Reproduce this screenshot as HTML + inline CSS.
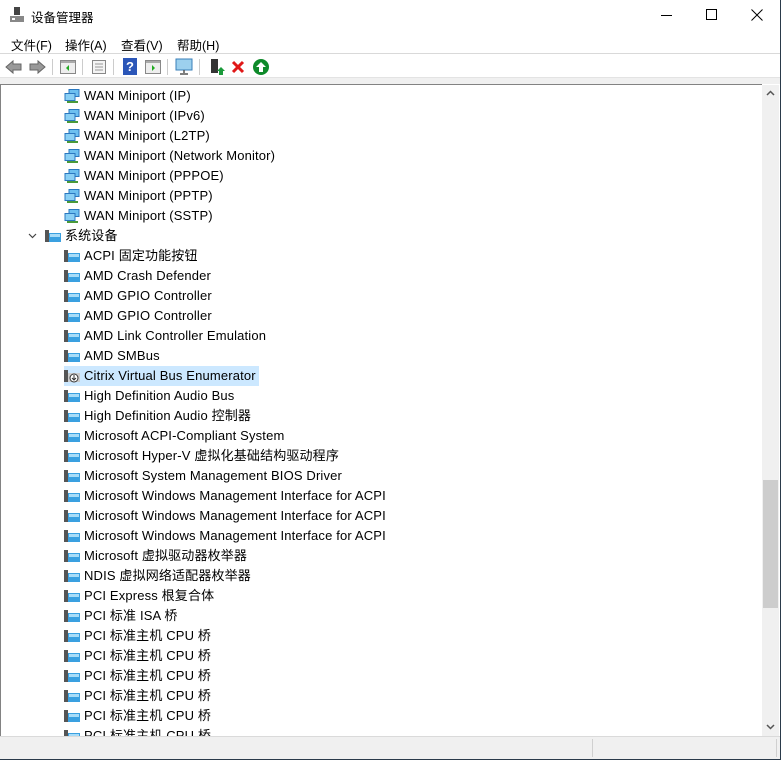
<!DOCTYPE html>
<html><head><meta charset="utf-8"><style>
*{margin:0;padding:0;box-sizing:border-box}
body{width:781px;height:760px;overflow:hidden;background:#fff;font-family:"Liberation Sans","Noto Sans CJK SC",sans-serif;font-size:12px;color:#000;position:relative}
.abs{position:absolute}
.title{left:0;top:0;width:781px;height:30px;background:#fff}
.menu{top:30px;height:24px;left:0;width:781px;border-bottom:1px solid #d9d9d9}
.menu span{position:absolute;top:5px;font-size:12.5px}
.tb{top:55px;height:23px;width:781px;border-bottom:1px solid #e3e3e3}
.gap{top:78px;height:6px;width:781px;background:#f0f0f0}
.tree{top:84px;left:0;width:762px;height:652px;border-top:1px solid #828282;border-left:1px solid #828282;overflow:hidden}
.row{position:absolute;height:20px;line-height:20px;font-size:13px;letter-spacing:0.15px;white-space:nowrap}
.ic{position:absolute;width:16px;height:14px;top:3px}
.sb{left:762px;top:85px;width:17px;height:651px;background:#f0f0f0}
.status{top:736px;left:0;width:781px;height:23px;background:#f0f0f0;border-top:1px solid #dadada}
.sep{position:absolute;top:4px;width:1px;height:16px;background:#ccc}
</style></head><body>
<div class="abs title">
 <svg class="abs" style="left:9px;top:7px" width="16" height="16"><rect x="5" y="0" width="6" height="8" fill="#444"/><rect x="1" y="9" width="14" height="6" fill="#888"/><rect x="3" y="11" width="3" height="2" fill="#fff"/></svg>
 <span class="abs" style="left:31px;top:7px;font-size:12.5px">设备管理器</span>
 <div class="abs" style="left:661px;top:15px;width:11px;height:1px;background:#000"></div>
 <div class="abs" style="left:706px;top:9px;width:11px;height:11px;border:1px solid #000"></div>
 <svg class="abs" style="left:751px;top:9px" width="12" height="12"><path d="M0.5 0.5L11.5 11.5M11.5 0.5L0.5 11.5" stroke="#000"/></svg>
</div>
<div class="abs menu">
 <span style="left:11px">文件(F)</span><span style="left:65px">操作(A)</span><span style="left:121px">查看(V)</span><span style="left:177px">帮助(H)</span>
</div>
<div class="abs tb">
 <svg class="abs" style="left:5px;top:4px" width="42" height="16"><path d="M1 8L8 2V5H16V11H8V14Z" fill="#999" stroke="#666"/><path d="M40 8L33 2V5H25V11H33V14Z" fill="#999" stroke="#666"/></svg>
 <div class="sep" style="left:52px"></div>
 <svg class="abs" style="left:60px;top:4px" width="16" height="16"><rect x="0.5" y="1.5" width="15" height="13" fill="#eee" stroke="#888"/><rect x="1" y="2" width="14" height="2" fill="#aaa"/><path d="M9 6L6 9L9 12Z" fill="#2a2"/></svg>
 <div class="sep" style="left:82px"></div>
 <svg class="abs" style="left:91px;top:4px" width="16" height="16"><rect x="1.5" y="1.5" width="13" height="13" fill="#f4f4f4" stroke="#888"/><path d="M4 5H12M4 8H12M4 11H12" stroke="#999"/></svg>
 <div class="sep" style="left:113px"></div>
 <div class="abs" style="left:123px;top:3px;width:14px;height:17px;background:#2b56b8;color:#fff;font-weight:bold;text-align:center;line-height:17px;font-size:13px">?</div>
 <svg class="abs" style="left:145px;top:4px" width="16" height="16"><rect x="0.5" y="1.5" width="15" height="13" fill="#eee" stroke="#888"/><rect x="1" y="2" width="14" height="2" fill="#aaa"/><path d="M7 6L10 9L7 12Z" fill="#2a2"/></svg>
 <div class="sep" style="left:167px"></div>
 <svg class="abs" style="left:175px;top:3px" width="18" height="18"><rect x="1" y="1" width="16" height="11" fill="#9cd0ee" stroke="#3a7fb8"/><path d="M9 12V15M5 16H13" stroke="#555" stroke-width="1.5"/></svg>
 <div class="sep" style="left:199px"></div>
 <svg class="abs" style="left:208px;top:3px" width="18" height="18"><rect x="3" y="1" width="7" height="14" fill="#333"/><path d="M13 9L17 13H15V17H11V13H9Z" fill="#1a9a3a"/></svg>
 <svg class="abs" style="left:231px;top:5px" width="14" height="14"><path d="M2 2L12 12M12 2L2 12" stroke="#e01818" stroke-width="3"/></svg>
 <svg class="abs" style="left:252px;top:3px" width="18" height="18"><circle cx="9" cy="9" r="8" fill="#0e8a2a"/><path d="M9 4L14 9H11V14H7V9H4Z" fill="#fff"/></svg>
</div>
<div class="abs gap"></div>
<div class="abs tree" id="tree"></div>
<div class="abs sb">
 <svg class="abs" style="left:4px;top:5px" width="9" height="6"><path d="M1 5L4.5 1.5L8 5" stroke="#555" stroke-width="1.5" fill="none"/></svg>
 <div class="abs" style="left:1px;top:395px;width:15px;height:128px;background:#cdcdcd"></div>
 <svg class="abs" style="left:4px;top:639px" width="9" height="6"><path d="M1 1L4.5 4.5L8 1" stroke="#555" stroke-width="1.5" fill="none"/></svg>
</div>
<div class="abs status"><div class="abs" style="left:592px;top:2px;width:1px;height:18px;background:#d0d0d0"></div><div class="abs" style="left:776px;top:2px;width:1px;height:18px;background:#d0d0d0"></div></div>
<div class="abs" style="left:780px;top:0;width:1px;height:760px;background:#2a3a4a"></div>
<div class="abs" style="left:0;top:759px;width:781px;height:1px;background:#2a3a4a"></div>
<script>
var net='<svg class="ic" viewBox="0 0 16 14"><rect x="5" y="0.5" width="10" height="7" fill="#6cc0f0" stroke="#2a78c0"/><rect x="1" y="4.5" width="10" height="7" fill="#8ad0f5" stroke="#2a78c0"/><path d="M3 13H14" stroke="#4a9a3a" stroke-width="2"/></svg>';
var sys='<svg class="ic" viewBox="0 0 16 14"><rect x="0" y="1" width="4" height="12" fill="#555"/><rect x="4" y="4" width="12" height="9" fill="#3aa0e0"/><rect x="5" y="5" width="10" height="3" fill="#a8dcf8"/></svg>';
var cit='<svg class="ic" viewBox="0 0 16 14"><rect x="0" y="1" width="4" height="12" fill="#555"/><rect x="4" y="4" width="12" height="9" fill="#ccc"/><circle cx="10" cy="9" r="4" fill="#fff" stroke="#333"/><path d="M10 6V11M8 9L10 11L12 9" stroke="#333" fill="none"/></svg>';
var items=[];
['WAN Miniport (IP)','WAN Miniport (IPv6)','WAN Miniport (L2TP)','WAN Miniport (Network Monitor)','WAN Miniport (PPPOE)','WAN Miniport (PPTP)','WAN Miniport (SSTP)'].forEach(function(t){items.push([net,t,63])});
items.push(['cat','系统设备',44]);
['ACPI 固定功能按钮','AMD Crash Defender','AMD GPIO Controller','AMD GPIO Controller','AMD Link Controller Emulation','AMD SMBus','CIT','High Definition Audio Bus','High Definition Audio 控制器','Microsoft ACPI-Compliant System','Microsoft Hyper-V 虚拟化基础结构驱动程序','Microsoft System Management BIOS Driver','Microsoft Windows Management Interface for ACPI','Microsoft Windows Management Interface for ACPI','Microsoft Windows Management Interface for ACPI','Microsoft 虚拟驱动器枚举器','NDIS 虚拟网络适配器枚举器','PCI Express 根复合体','PCI 标准 ISA 桥','PCI 标准主机 CPU 桥','PCI 标准主机 CPU 桥','PCI 标准主机 CPU 桥','PCI 标准主机 CPU 桥','PCI 标准主机 CPU 桥','PCI 标准主机 CPU 桥'].forEach(function(t){items.push([sys,t,63])});
var h='';
items.forEach(function(it,i){
 var y=1+i*20,ic=it[0],t=it[1],x=it[2],bg='';
 if(ic=='cat'){ic=sys;h+='<svg class="abs" style="left:27px;top:'+(y+7)+'px" width="9" height="6"><path d="M1 1L4.5 4.5L8 1" stroke="#444" stroke-width="1.2" fill="none"/></svg>';}
 if(t=='CIT'){ic=cit;t='Citrix Virtual Bus Enumerator';bg='background:#cce8ff;';}
 h+='<div class="row" style="top:'+y+'px;left:'+x+'px;'+bg+'padding-left:20px;padding-right:3px">'+ic.replace('class="ic"','class="ic" style="left:0"')+t+'</div>';
});
document.getElementById('tree').innerHTML=h;
</script>
</body></html>
